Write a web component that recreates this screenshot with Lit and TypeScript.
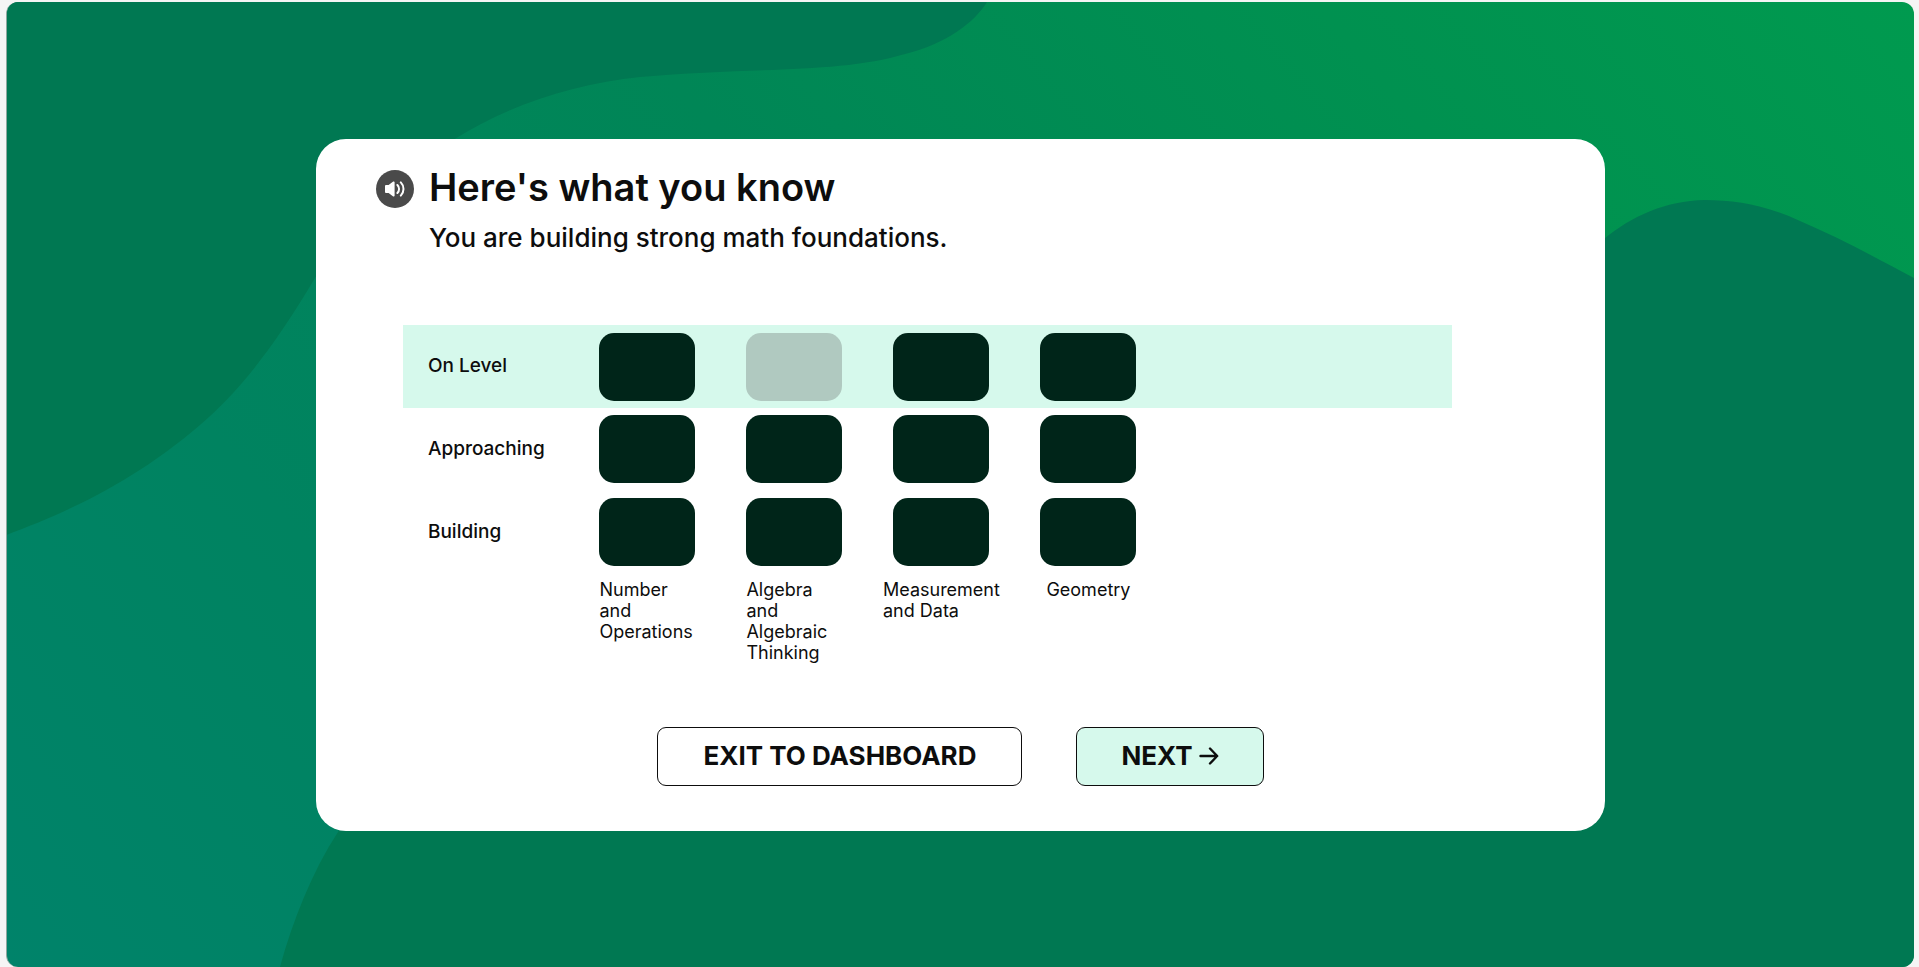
import { LitElement, html, css, svg } from "lit";
import { customElement } from "lit/decorators.js";
import { classMap } from "lit/directives/class-map.js";

interface Level {
  name: string;
  current: boolean;
  earned: boolean[];
}

const DOMAINS = [
  "Number and Operations",
  "Algebra and Algebraic Thinking",
  "Measurement and Data",
  "Geometry",
];

const LEVELS: Level[] = [
  { name: "On Level", current: true, earned: [true, false, true, true] },
  { name: "Approaching", current: false, earned: [true, true, true, true] },
  { name: "Building", current: false, earned: [true, true, true, true] },
];

const speakerIcon = svg`
  <path d="M1 5.200C1 4.400 1.500 4 2.200 4H4.600L9.200 .6C9.800 .2 10.600 .4 10.600 1.200V14.800C10.600 15.600 9.800 15.800 9.200 15.400L4.600 12H2.200C1.500 12 1 11.600 1 10.800Z" fill="#fff"/>
  <path d="M13.400 4C15.600 6 15.600 10 13.400 12M16.800 1.400C20.400 5 20.400 11 16.800 14.600" fill="none" stroke="#fff" stroke-width="2" stroke-linecap="round"/>`;

@customElement("skills-chart")
export class SkillsChart extends LitElement {
  static styles = css`
    :host {
      display: block;
    }
    .chart {
      width: 100%;
      border-collapse: collapse;
      table-layout: fixed;
      color: #0d0d0d;
    }
    .col-label {
      width: 171px;
    }
    .col-domain {
      width: 147px;
    }
    .level {
      padding: 0 0 0 25px;
      font-size: 19px;
      line-height: 24px;
      font-weight: 450;
      text-align: left;
      vertical-align: middle;
      white-space: nowrap;
    }
    .slot {
      padding: 7px 0 8px;
    }
    .current .slot {
      padding: 8px 0 7px;
    }
    .current {
      background: #d6f9ec;
    }
    .tile {
      display: block;
      width: 96px;
      height: 68px;
      margin: 0 auto;
      border-radius: 15px;
      background: #002519;
    }
    .tile.missing {
      background: #b0c9c0;
    }
    .domain {
      padding: 5px 0 0;
      font-weight: 400;
      vertical-align: top;
    }
    .domain-box {
      display: flex;
      justify-content: center;
    }
    .domain-text {
      min-width: min-content;
      max-width: 96px;
      font-size: 18px;
      line-height: 21px;
      text-align: left;
    }
  `;

  render() {
    return html`
      <table class="chart" aria-label="What you know by level">
        <colgroup>
          <col class="col-label" />
          ${DOMAINS.map(() => html`<col class="col-domain" />`)}
          <col />
        </colgroup>
        <tbody>
          ${LEVELS.map(
            (level) => html`
              <tr class=${classMap({ current: level.current })}>
                <th class="level" scope="row">${level.name}</th>
                ${level.earned.map(
                  (earned) => html`<td class="slot">
                    <span class=${classMap({ tile: true, missing: !earned })}></span>
                  </td>`
                )}
                <td></td>
              </tr>
            `
          )}
        </tbody>
        <tfoot>
          <tr>
            <td></td>
            ${DOMAINS.map(
              (domain) => html`<th class="domain" scope="col">
                <div class="domain-box"><span class="domain-text">${domain}</span></div>
              </th>`
            )}
            <td></td>
          </tr>
        </tfoot>
      </table>
    `;
  }
}

@customElement("app-root")
export class AppRoot extends LitElement {
  static styles = css`
    :host {
      display: block;
      font-family: Inter, "Open Sans", sans-serif;
      color: #0d0d0d;
      background: #f5f5f5;
    }
    * {
      box-sizing: border-box;
    }
    .page {
      display: flex;
      min-height: 100vh;
      padding: 2px 5px 0 6px;
    }
    .stage {
      position: relative;
      flex: 1;
      display: flex;
      align-items: center;
      justify-content: center;
      overflow: hidden;
      border-left: 1px solid #8fa79f;
      border-radius: 12px;
      background: linear-gradient(50deg, #00836a 0%, #008360 24%, #008656 52%, #009150 78%, #009a4f 100%);
    }
    .waves {
      position: absolute;
      inset: 0;
      width: 100%;
      height: 100%;
    }
    .card {
      position: relative;
      width: 67.6%;
      padding: 27px 60px 45px;
      border-radius: 30px;
      background: #fff;
    }
    .heading {
      display: grid;
      grid-template-columns: 38px 1fr;
      column-gap: 15px;
      align-items: center;
    }
    .listen {
      display: flex;
      align-items: center;
      justify-content: center;
      width: 38px;
      height: 38px;
      margin-top: 4px;
      padding: 0;
      border: 0;
      border-radius: 50%;
      background: #4a4a4a;
    }
    .listen-icon {
      width: 21px;
      height: 16px;
    }
    .title {
      margin: 0;
      font-size: 38px;
      line-height: 40px;
      font-weight: 600;
    }
    .summary {
      grid-column: 2;
      margin: 14px 0 0;
      font-size: 26px;
      line-height: 32px;
      font-weight: 450;
    }
    .chart-area {
      display: block;
      margin: 71px 93px 64px 27px;
    }
    .actions {
      display: flex;
      justify-content: center;
      gap: 54px;
    }
    .action {
      display: flex;
      align-items: center;
      gap: 6px;
      height: 59px;
      padding: 0 45px;
      border: 1px solid #0d0d0d;
      border-radius: 9px;
      background: #fff;
      color: #0d0d0d;
      font-family: inherit;
      font-size: 26px;
      line-height: 32px;
      font-weight: 700;
    }
    .action.primary {
      padding: 0 44px;
      background: #d6f9ec;
    }
    .arrow {
      width: 20px;
      height: 18px;
    }
  `;

  render() {
    return html`
      <main class="page">
        <div class="stage">
          <svg class="waves" viewBox="7 2 1907 965" preserveAspectRatio="none" aria-hidden="true">
            <path
              fill="#007852"
              d="M6 2H987C975 22 946 44 905 54C840 74 745 67 640 77C575 84 510 104 453 140C390 180 350 220 315 278C270 354 235 395 200 425C130 485 60 515 6 535Z"
            />
            <path
              fill="#007852"
              d="M1914 278C1880 260 1840 238 1800 221C1765 205 1735 200 1705 200C1665 201 1632 216 1604 239C1560 280 1500 500 1200 560C800 640 420 700 338 832C312 872 293 920 280 967H1914Z"
            />
          </svg>
          <section class="card">
            <header class="heading">
              <button class="listen" type="button" aria-label="Read aloud">
                <svg class="listen-icon" viewBox="0 0 21 16" aria-hidden="true">${speakerIcon}</svg>
              </button>
              <h1 class="title">Here's what you know</h1>
              <p class="summary">You are building strong math foundations.</p>
            </header>
            <skills-chart class="chart-area"></skills-chart>
            <div class="actions">
              <button class="action" type="button">EXIT TO DASHBOARD</button>
              <button class="action primary" type="button">
                NEXT
                <svg class="arrow" viewBox="0 0 20 18" aria-hidden="true">
                  <path
                    d="M1.500 9H18M11 1.500L18.200 9L11 16.500"
                    fill="none"
                    stroke="#0d0d0d"
                    stroke-width="2.400"
                    stroke-linecap="round"
                    stroke-linejoin="round"
                  />
                </svg>
              </button>
            </div>
          </section>
        </div>
      </main>
    `;
  }
}
